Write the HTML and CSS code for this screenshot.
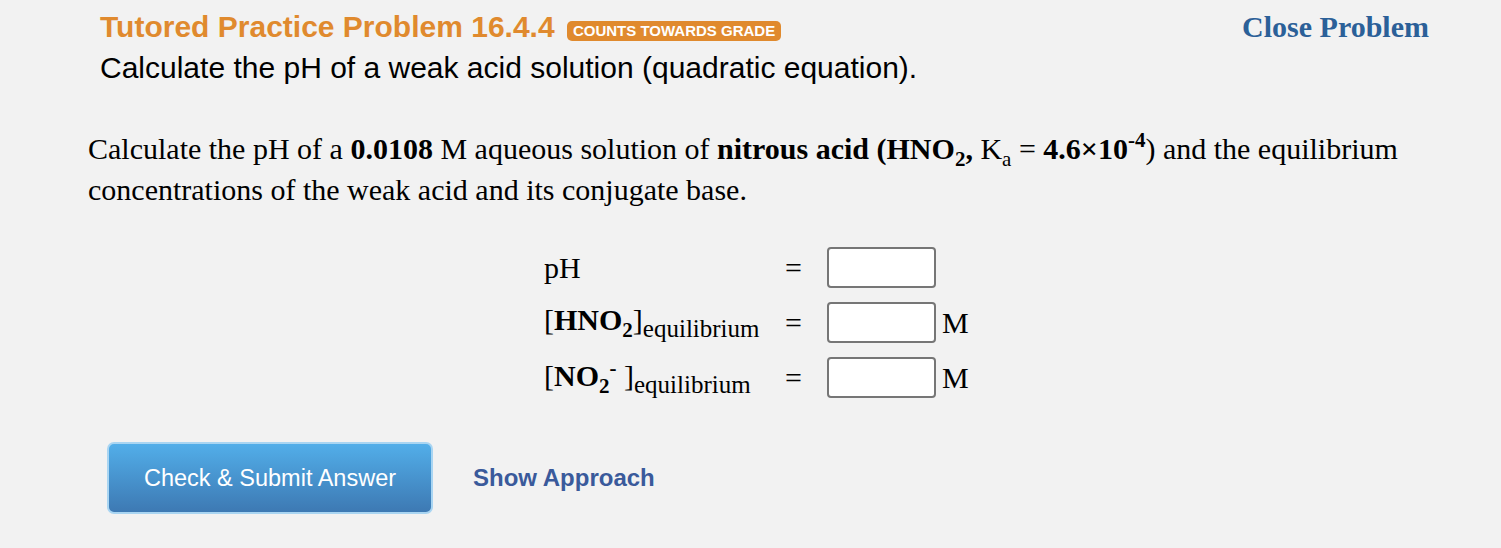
FILE: index.html
```html
<!DOCTYPE html>
<html>
<head>
<meta charset="utf-8">
<link rel="stylesheet" href="styles.css">
</head>
<body>
<div class="page">
  <header class="head">
    <div class="head-text">
      <h1 class="title">Tutored Practice Problem 16.4.4 <span class="badge">COUNTS TOWARDS GRADE</span></h1>
      <p class="subtitle">Calculate the pH of a weak acid solution (quadratic equation).</p>
    </div>
    <a class="close" href="#">Close Problem</a>
  </header>

  <p class="question">Calculate the pH of a <b>0.0108</b> M aqueous solution of <b>nitrous acid (HNO<sub>2</sub>, </b>K<sub>a</sub> = <b>4.6×10<sup>-4</sup></b>) and the equilibrium concentrations of the weak acid and its conjugate base.</p>

  <div class="answers">
    <div class="row">
      <span class="lbl">pH</span>
      <span class="eq">=</span>
      <span class="box"></span>
      <span class="unit"></span>
    </div>
    <div class="row">
      <span class="lbl">[<b>HNO<sub>2</sub></b>]<sub class="eqsub">equilibrium</sub></span>
      <span class="eq">=</span>
      <span class="box"></span>
      <span class="unit">M</span>
    </div>
    <div class="row">
      <span class="lbl">[<b>NO<sub>2</sub><sup>-</sup></b> ]<sub class="eqsub">equilibrium</sub></span>
      <span class="eq">=</span>
      <span class="box"></span>
      <span class="unit">M</span>
    </div>
  </div>

  <div class="actions">
    <button class="submit">Check &amp; Submit Answer</button>
    <a class="approach" href="#">Show Approach</a>
  </div>
</div>
</body>
</html>
```

FILE: styles.css
```css
html, body {
  margin: 0;
  padding: 0;
  background: #f2f2f2;
}
.page {
  padding: 9px 72px 0 88px;
}
.head {
  display: flex;
  justify-content: space-between;
  align-items: baseline;
  padding-left: 12px;
}
.title {
  margin: 0;
  font-family: "Liberation Sans", Arial, sans-serif;
  font-weight: bold;
  font-size: 30px;
  line-height: 36px;
  color: #e08a2e;
}
.badge {
  display: inline-block;
  vertical-align: 1px;
  background: #e08a2e;
  color: #fff;
  font-size: 15px;
  line-height: 20px;
  padding: 0 6px;
  border-radius: 5px;
  letter-spacing: 0;
  margin-left: 4px;
}
.subtitle {
  margin: 5px 0 0;
  font-family: "Liberation Sans", Arial, sans-serif;
  font-size: 30px;
  line-height: 36px;
  color: #000;
}
.close {
  font-family: "Liberation Serif", "Times New Roman", serif;
  font-weight: bold;
  font-size: 30px;
  line-height: 36px;
  color: #2b6098;
  text-decoration: none;
}
.question {
  margin: 43px 0 0;
  font-family: "Liberation Serif", "Times New Roman", serif;
  font-size: 30px;
  line-height: 40px;
  color: #000;
}
.question sub, .question sup {
  font-size: 21px;
  line-height: 1;
}
.question sup {
  vertical-align: 0.55em;
}
.answers {
  margin: 37px 0 0 456px;
  font-family: "Liberation Serif", "Times New Roman", serif;
  font-size: 30px;
  color: #000;
}
.row {
  display: flex;
  align-items: center;
  height: 41px;
  margin-bottom: 14px;
}
.lbl {
  width: 241px;
  line-height: 1;
}
.lbl sub, .lbl sup {
  line-height: 1;
  font-size: 21px;
}
.lbl .eqsub {
  font-size: 25px;
}
.eq {
  width: 42px;
}
.box {
  width: 105px;
  height: 37px;
  background: #fff;
  border: 2px solid #767676;
  border-radius: 4px;
}
.unit {
  margin-left: 6px;
}
.actions {
  display: flex;
  align-items: center;
  margin: 44px 0 0 19px;
}
.submit {
  width: 326px;
  height: 72px;
  border: 2px solid #a9d5f2;
  border-radius: 7px;
  background: linear-gradient(#52aee9, #3d79b3);
  color: #fff;
  font-family: "Liberation Sans", Arial, sans-serif;
  font-size: 23.5px;
  cursor: pointer;
}
.approach {
  margin-left: 40px;
  font-family: "Liberation Sans", Arial, sans-serif;
  font-weight: bold;
  font-size: 24px;
  color: #3a5a9b;
  text-decoration: none;
}
```
